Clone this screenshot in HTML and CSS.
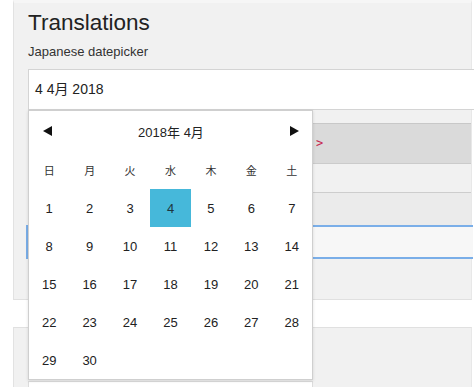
FILE: index.html
```html
<!DOCTYPE html>
<html lang="ja">
<head>
<meta charset="utf-8">
<title>Translations</title>
<link rel="stylesheet" href="styles.css">
</head>
<body>
<div class="page">
  <section class="panel">
    <h1 class="title">Translations</h1>
    <div class="label">Japanese datepicker</div>
    <div class="field-wrap">
      <div class="input">4 4月 2018</div>
      <div class="picker">
        <div class="picker-head">
          <svg class="arrow" width="9" height="10" viewBox="0 0 9 10"><polygon points="9,0 9,10 0,5" fill="#111"/></svg>
          <span class="picker-title">2018年 4月</span>
          <svg class="arrow" width="9" height="10" viewBox="0 0 9 10"><polygon points="0,0 0,10 9,5" fill="#111"/></svg>
        </div>
        <div class="grid">
          <span class="dow">日</span><span class="dow">月</span><span class="dow">火</span><span class="dow">水</span><span class="dow">木</span><span class="dow">金</span><span class="dow">土</span>
          <span class="day">1</span><span class="day">2</span><span class="day">3</span><span class="day sel">4</span><span class="day">5</span><span class="day">6</span><span class="day">7</span>
          <span class="day">8</span><span class="day">9</span><span class="day">10</span><span class="day">11</span><span class="day">12</span><span class="day">13</span><span class="day">14</span>
          <span class="day">15</span><span class="day">16</span><span class="day">17</span><span class="day">18</span><span class="day">19</span><span class="day">20</span><span class="day">21</span>
          <span class="day">22</span><span class="day">23</span><span class="day">24</span><span class="day">25</span><span class="day">26</span><span class="day">27</span><span class="day">28</span>
          <span class="day">29</span><span class="day">30</span>
        </div>
      </div>
    </div>
    <pre class="code"><code>&gt;</code></pre>
    <div class="block"></div>
    <div class="focus-input"></div>
  </section>
  <section class="panel panel2">
    <div class="box"></div>
  </section>
</div>
</body>
</html>
```
FILE: styles.css
```css
html, body {
  margin: 0;
  padding: 0;
  background: #fff;
  overflow: hidden;
}
body {
  font-family: "Liberation Sans", "Noto Sans CJK JP", sans-serif;
  color: #333;
}
.page {
  padding-left: 13px;
}
.panel {
  box-sizing: border-box;
  width: 459px;
  background: #f1f1f1;
  border-left: 1px solid #e2e2e2;
  border-right: 1px solid #e8e8e8;
  border-bottom: 1px solid #e0e0e0;
  border-top: 3px solid #f6f6f6;
  padding: 7px 0 40px 14px;
}
.title {
  margin: 0;
  font-size: 22.5px;
  font-weight: 400;
  line-height: 26px;
  color: #222;
}
.label {
  margin-top: 8px;
  font-size: 13px;
  line-height: 16px;
  color: #333;
}
.field-wrap {
  position: relative;
  margin-top: 9px;
}
.input {
  box-sizing: border-box;
  width: 446px;
  height: 41px;
  background: #fff;
  border: 1px solid #d4d4d4;
  border-right: none;
  padding-left: 6px;
  font-size: 14px;
  line-height: 39px;
  color: #222;
}
.picker {
  position: absolute;
  left: 0;
  top: 41px;
  z-index: 5;
  box-sizing: border-box;
  width: 285px;
  background: #fff;
  border: 1px solid #cfcfcf;
  box-shadow: 0 1px 3px rgba(0, 0, 0, 0.12);
}
.picker-head {
  height: 40px;
  display: flex;
  align-items: center;
  justify-content: space-between;
  padding: 0 13px 0 14px;
}
.arrow {
  display: block;
}
.picker-title {
  font-size: 13px;
  color: #222;
}
.grid {
  display: grid;
  grid-template-columns: repeat(7, 1fr);
  grid-auto-rows: 38px;
}
.dow, .day {
  display: flex;
  align-items: center;
  justify-content: center;
}
.dow {
  font-size: 11px;
  color: #333;
}
.day {
  font-size: 13px;
  color: #222;
}
.day.sel {
  background: #46b8da;
  color: #1e3640;
}
.code {
  box-sizing: border-box;
  margin: 13px 0 0;
  height: 41px;
  background: #dadada;
  border-top: 1px solid #c8c8c8;
  border-bottom: 1px solid #cbcbcb;
  padding-left: 288px;
  font-family: "Liberation Mono", monospace;
  font-size: 12px;
  line-height: 39px;
  color: #c7254e;
  overflow: hidden;
}
.block {
  margin-top: 28px;
  height: 33px;
  box-sizing: border-box;
  background: #ebebeb;
  border-top: 1px solid #cdcdcd;
}
.focus-input {
  box-sizing: border-box;
  height: 34px;
  margin-left: -2px;
  margin-right: -2px;
  background: #f7f7f7;
  border: 2px solid #7aaee8;
  border-right: none;
}
.panel2 {
  margin-top: 27px;
  border-top: 1px solid #e0e0e0;
  border-bottom: none;
  padding: 53px 0 0 14px;
  height: 60px;
}
.box {
  width: 285px;
  height: 6px;
  box-sizing: border-box;
  background: #fff;
  border: 1px solid #dcdcdc;
  border-bottom: none;
}
```
